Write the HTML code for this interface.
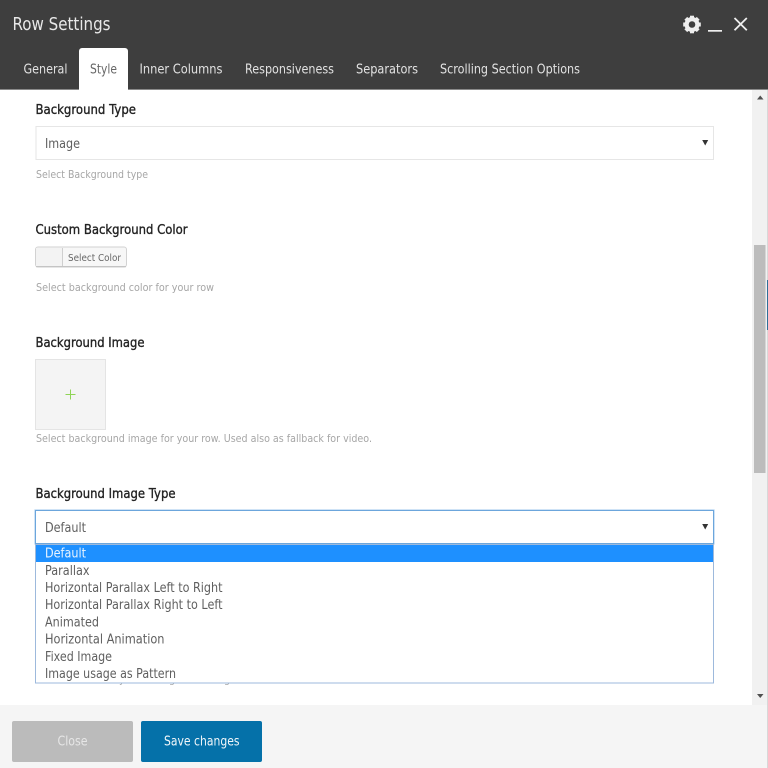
<!DOCTYPE html>
<html lang="en">
<head>
<meta charset="utf-8">
<title>Row Settings</title>
<style>
html,body{margin:0;padding:0;width:768px;height:768px;overflow:hidden;background:#fff}
svg{display:block;position:absolute;left:0;top:0}
text{font-family:"DejaVu Sans","Liberation Sans",sans-serif}
.tab{font-size:13px;fill:#e2e2e2}
.lab{font-size:13px;fill:#222;stroke:#222;stroke-width:.35px}
.hint{font-size:10.5px;fill:#a6a6a6}
.opt{font-size:13px;fill:#5f5f5f}
</style>
</head>
<body>
<svg width="768" height="768" viewBox="0 0 768 768" xmlns="http://www.w3.org/2000/svg">
  <!-- header -->
  <rect x="0" y="0" width="768" height="90" fill="#3e3e3e"/>
  <rect x="0" y="89" width="768" height="1" fill="#8a8a8a"/>
  <text x="12.5" y="30" font-size="17.5" fill="#e8e8e8" textLength="98" lengthAdjust="spacingAndGlyphs">Row Settings</text>

  <!-- header icons -->
  <g fill="#eeeeee">
    <circle cx="692" cy="24.5" r="5.4" fill="none" stroke="#eeeeee" stroke-width="4.2"/>
    <g>
      <rect x="690" y="15.7" width="4" height="3"/>
      <rect x="690" y="30.3" width="4" height="3"/>
      <rect x="683.2" y="22.5" width="3" height="4"/>
      <rect x="697.8" y="22.5" width="3" height="4"/>
      <rect x="690" y="15.7" width="4" height="3" transform="rotate(45 692 24.5)"/>
      <rect x="690" y="30.3" width="4" height="3" transform="rotate(45 692 24.5)"/>
      <rect x="683.2" y="22.5" width="3" height="4" transform="rotate(45 692 24.5)"/>
      <rect x="697.8" y="22.5" width="3" height="4" transform="rotate(45 692 24.5)"/>
    </g>
    <rect x="708" y="30" width="14" height="1.7"/>
  </g>
  <path d="M734.5 18 L746.8 30.3 M746.8 18 L734.5 30.3" stroke="#eeeeee" stroke-width="1.8" fill="none"/>

  <!-- tabs -->
  <path d="M79 90 V51 a3 3 0 0 1 3 -3 H125 a3 3 0 0 1 3 3 V90 Z" fill="#ffffff"/>
  <text class="tab" x="23.5" y="73.5" textLength="44" lengthAdjust="spacingAndGlyphs">General</text>
  <text x="90" y="73.5" font-size="13" fill="#666" textLength="27" lengthAdjust="spacingAndGlyphs">Style</text>
  <text class="tab" x="139.5" y="73.5" textLength="83" lengthAdjust="spacingAndGlyphs">Inner Columns</text>
  <text class="tab" x="245" y="73.5" textLength="89" lengthAdjust="spacingAndGlyphs">Responsiveness</text>
  <text class="tab" x="356" y="73.5" textLength="62" lengthAdjust="spacingAndGlyphs">Separators</text>
  <text class="tab" x="440" y="73.5" textLength="140" lengthAdjust="spacingAndGlyphs">Scrolling Section Options</text>

  <!-- Background type -->
  <text class="lab" x="35.5" y="114" textLength="100.5" lengthAdjust="spacingAndGlyphs">Background Type</text>
  <rect x="36" y="126.5" width="677.5" height="33" fill="#fff" stroke="#e6e6e6" stroke-width="1"/>
  <text class="opt" x="45" y="148" textLength="35" lengthAdjust="spacingAndGlyphs">Image</text>
  <path d="M702.2 140 h6 l-3 5.5 Z" fill="#333"/>
  <text class="hint" x="36" y="178" textLength="112" lengthAdjust="spacingAndGlyphs">Select Background type</text>

  <!-- Custom color -->
  <text class="lab" x="35.5" y="234" textLength="152" lengthAdjust="spacingAndGlyphs">Custom Background Color</text>
  <rect x="35.5" y="247" width="91" height="20" rx="2.5" fill="#f7f7f7" stroke="#d2d2d2" stroke-width="1"/>
  <rect x="36" y="266" width="90" height="1.2" fill="#c4c4c4"/>
  <rect x="36" y="248" width="26" height="18" fill="#f3f3f3"/>
  <rect x="62" y="248" width="1" height="18" fill="#cfcfcf"/>
  <text x="68" y="261" font-size="10" fill="#666" textLength="53" lengthAdjust="spacingAndGlyphs">Select Color</text>
  <text class="hint" x="36" y="291" textLength="178" lengthAdjust="spacingAndGlyphs">Select background color for your row</text>

  <!-- Background image -->
  <text class="lab" x="35.5" y="347" textLength="109" lengthAdjust="spacingAndGlyphs">Background Image</text>
  <rect x="35.5" y="359.5" width="70" height="70" fill="#f4f4f4" stroke="#e4e4e4" stroke-width="1"/>
  <path d="M70.5 389.5 V399.5 M65.5 394.5 H75.5" stroke="#8fd456" stroke-width="1" fill="none"/>
  <text class="hint" x="36" y="442" textLength="336" lengthAdjust="spacingAndGlyphs">Select background image for your row. Used also as fallback for video.</text>

  <!-- Background image type -->
  <text class="lab" x="35.5" y="498" textLength="140" lengthAdjust="spacingAndGlyphs">Background Image Type</text>
  <!-- hint text mostly hidden behind the open list: only descenders peek out -->
  <text class="hint" x="36" y="683" textLength="100" lengthAdjust="spacingAndGlyphs">Select how would you</text>
  <text class="hint" x="151" y="683" textLength="30" lengthAdjust="spacingAndGlyphs">image</text>
  <text class="hint" x="206" y="683" textLength="30" lengthAdjust="spacingAndGlyphs">image</text>
  <rect x="34.5" y="509.5" width="680" height="35" rx="1" fill="none" stroke="#cfe3f6" stroke-width="1"/>
  <rect x="35.5" y="510.5" width="678" height="33" fill="#fff" stroke="#6ca6dc" stroke-width="1"/>
  <text class="opt" x="45" y="532" textLength="41" lengthAdjust="spacingAndGlyphs">Default</text>
  <path d="M702.2 524 h6 l-3 5.5 Z" fill="#333"/>

  <!-- dropdown list -->
  <rect x="35.5" y="544.5" width="678" height="138.5" fill="#fff" stroke="#9db9dc" stroke-width="1"/>
  <rect x="36" y="545" width="677" height="17" fill="#1e90ff"/>
  <text x="45" y="557.5" font-size="13" fill="#e9f4ff" textLength="41" lengthAdjust="spacingAndGlyphs">Default</text>
  <text class="opt" x="45" y="575" textLength="44.5" lengthAdjust="spacingAndGlyphs">Parallax</text>
  <text class="opt" x="45" y="592" textLength="177.5" lengthAdjust="spacingAndGlyphs">Horizontal Parallax Left to Right</text>
  <text class="opt" x="45" y="609" textLength="177.5" lengthAdjust="spacingAndGlyphs">Horizontal Parallax Right to Left</text>
  <text class="opt" x="45" y="626.5" textLength="54" lengthAdjust="spacingAndGlyphs">Animated</text>
  <text class="opt" x="45" y="643.5" textLength="119.5" lengthAdjust="spacingAndGlyphs">Horizontal Animation</text>
  <text class="opt" x="45" y="661" textLength="67" lengthAdjust="spacingAndGlyphs">Fixed Image</text>
  <text class="opt" x="45" y="678" textLength="131" lengthAdjust="spacingAndGlyphs">Image usage as Pattern</text>

  <!-- scrollbar -->
  <rect x="752" y="90" width="16" height="615" fill="#f1f1f1"/>
  <rect x="754" y="245" width="11.5" height="228" fill="#bcbcbc"/>
  <path d="M757 99.5 h6.5 l-3.25 -4 Z" fill="#505050"/>
  <path d="M757 694 h6.5 l-3.25 4 Z" fill="#505050"/>

  <!-- footer -->
  <rect x="0" y="705" width="768" height="63" fill="#f5f5f5"/>
  <rect x="12" y="721" width="121" height="41" rx="2" fill="#bbbbbb"/>
  <text x="57.5" y="745.5" font-size="13" fill="#e6e6e6" textLength="30" lengthAdjust="spacingAndGlyphs">Close</text>
  <rect x="141" y="721" width="121" height="41" rx="2" fill="#0571a9"/>
  <text x="164" y="745.5" font-size="13" fill="#f2f7fa" textLength="75.5" lengthAdjust="spacingAndGlyphs">Save changes</text>

  <!-- right edge strip -->
  <rect x="767" y="90" width="1" height="678" fill="#d8d8d8"/>
  <rect x="767" y="280" width="1" height="50" fill="#2f6f98"/>
</svg>
</body>
</html>
